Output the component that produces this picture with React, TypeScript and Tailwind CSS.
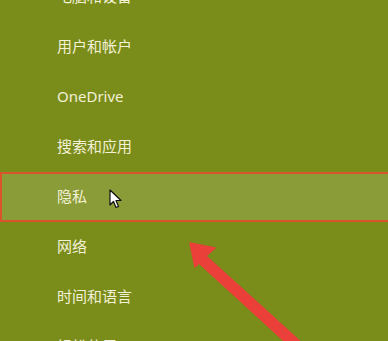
import React from "react";

const items = [
  "电脑和设备",
  "用户和帐户",
  "OneDrive",
  "搜索和应用",
  "隐私",
  "网络",
  "时间和语言",
  "轻松使用",
];

function Cursor() {
  return (
    <svg width="14" height="21" viewBox="0 0 14 21" className="absolute left-[107px] top-[15px]">
      <path
        d="M1 1 L1 16 L4.5 12.5 L7 18.5 L9.5 17.5 L7 11.5 L12 11.5 Z"
        fill="#ffffff"
        stroke="#111111"
        strokeWidth="1.2"
        strokeLinejoin="round"
      />
    </svg>
  );
}

function RedArrow() {
  return (
    <svg
      width="388"
      height="341"
      viewBox="0 0 388 341"
      className="absolute inset-0 pointer-events-none"
    >
      <polygon
        points="190,243 215,248 206,256 304,345 293,349 199,263 195,267"
        fill="#f23c3c"
        stroke="#f23c3c"
        strokeWidth="1.5"
        strokeLinejoin="round"
        opacity="0.95"
      />
    </svg>
  );
}

export default function App() {
  return (
    <div
      className="relative w-[388px] h-[341px] overflow-hidden bg-[#7a8c1a]"
      style={{ fontFamily: '"Noto Sans", "Noto Sans CJK SC", sans-serif' }}
    >
      <ul className="-mt-[28px]">
        {items.map((label) => {
          const active = label === "隐私";
          return (
            <li
              key={label}
              className={
                active
                  ? "relative h-[50px] flex items-center pl-[55px] pb-[2px] bg-[#8a9c37] border-[2.5px] border-r-0 border-[#d9532b] -mr-4"
                  : "h-[50px] flex items-center pl-[57px] pb-[2px]"
              }
            >
              <span className="text-[15px] text-[#f3f1d6] leading-none">{label}</span>
              {active && <Cursor />}
            </li>
          );
        })}
      </ul>
      <RedArrow />
    </div>
  );
}
